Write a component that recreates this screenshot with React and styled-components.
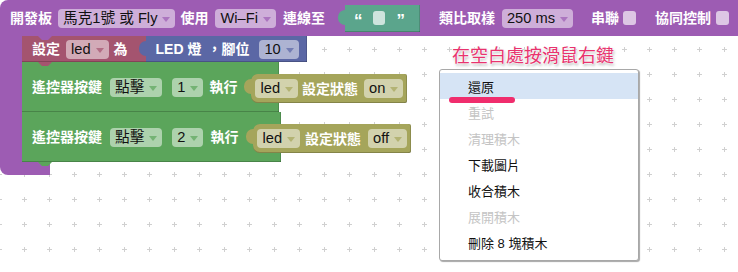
import styled, { createGlobalStyle, css } from "styled-components"

const FONT = `"Liberation Sans", "Noto Sans CJK TC", sans-serif`

const PURPLE = "#9d5cb3"
const RED = "#a4546f"
const BLUE = "#5b67a5"
const GREEN = "#5ba55b"
const OLIVE = "#a5a55b"
const TEAL = "#5ba58c"

const GlobalStyle = createGlobalStyle`
  html, body { margin: 0; padding: 0; background: #fff; }
  body { font-family: ${FONT}; }
`

// small notch hanging under a statement block
const notch = (color, left) => css`
  &::after {
    content: "";
    position: absolute;
    left: ${left}px;
    bottom: -4px;
    width: 14px;
    height: 4px;
    background: ${color};
    clip-path: polygon(0 0, 100% 0, 72% 100%, 28% 100%);
    z-index: 3;
  }
`

const App = () => {
  return (
    <>
      <GlobalStyle />
      <Workspace>
        <GridSvg width="738" height="272">
          <defs>
            <pattern id="grid" x="12" y="12" width="25" height="25" patternUnits="userSpaceOnUse">
              <path d="M10 12.5h5M12.5 10v5" stroke="#d0d0d0" strokeWidth="1" />
            </pattern>
          </defs>
          <rect width="738" height="272" fill="url(#grid)" />
        </GridSvg>

        <CBlock>
          <CHeader>
            <Label>開發板</Label>
            <Field $ml={6}>馬克1號 或 Fly<Arrow $color={PURPLE} /></Field>
            <Label $ml={5}>使用</Label>
            <Field $ml={7}>Wi–Fi<Arrow $color={PURPLE} /></Field>
            <Label $ml={7}>連線至</Label>
            <ValueBlock $color={TEAL} $h={27} $ml={20} $pl={9} $pr={15}>
              <Quote>“</Quote>
              <TextSlot />
              <Quote>”</Quote>
            </ValueBlock>
            <Label $ml={19}>類比取樣</Label>
            <Field $ml={7}>250 ms<Arrow $color={PURPLE} /></Field>
            <Label $ml={18}>串聯</Label>
            <Check $ml={4} />
            <Label $ml={19}>協同控制</Label>
            <Check $ml={5} />
          </CHeader>

          <CBody>
            <Arm />
            <Stack>
              <Statement $color={RED} $h={26}>
                <Label>設定</Label>
                <Field $ml={6}>led<Arrow $color={RED} /></Field>
                <Label $ml={5}>為</Label>
                <ValueBlock $color={BLUE} $stretch $ml={18} $pl={10} $pr={8}>
                  <Label>LED 燈</Label>
                  <Label $ml={6}>，腳位</Label>
                  <Field $ml={10}>10<Arrow $color={BLUE} /></Field>
                </ValueBlock>
              </Statement>

              <Statement $color={GREEN} $h={50} $w={257}>
                <Label>遙控器按鍵</Label>
                <Field $ml={8}>點擊<Arrow $color={GREEN} /></Field>
                <Field $ml={10}>1<Arrow $color={GREEN} /></Field>
                <Label $ml={6}>執行</Label>
                <ValueBlock $color={OLIVE} $h={29} $ml={14} $pl={4} $pr={4} $rounded $drop>
                  <Field>led<Arrow $color={OLIVE} /></Field>
                  <Label $ml={4}>設定狀態</Label>
                  <Field $ml={6}>on<Arrow $color={OLIVE} /></Field>
                </ValueBlock>
              </Statement>

              <Statement $color={GREEN} $h={50} $w={259}>
                <Label>遙控器按鍵</Label>
                <Field $ml={8}>點擊<Arrow $color={GREEN} /></Field>
                <Field $ml={10}>2<Arrow $color={GREEN} /></Field>
                <Label $ml={7}>執行</Label>
                <ValueBlock $color={OLIVE} $h={29} $ml={15} $pl={4} $pr={4} $rounded $drop>
                  <Field>led<Arrow $color={OLIVE} /></Field>
                  <Label $ml={5}>設定狀態</Label>
                  <Field $ml={7}>off<Arrow $color={OLIVE} /></Field>
                </ValueBlock>
              </Statement>
            </Stack>
          </CBody>
          <CFoot />
        </CBlock>

        <Note>在空白處按滑鼠右鍵</Note>

        <Menu>
          <MenuItem $active>還原</MenuItem>
          <MenuItem $disabled>重試</MenuItem>
          <MenuItem $disabled>清理積木</MenuItem>
          <MenuItem>下載圖片</MenuItem>
          <MenuItem>收合積木</MenuItem>
          <MenuItem $disabled>展開積木</MenuItem>
          <MenuItem>刪除 8 塊積木</MenuItem>
        </Menu>
        <Underline />
      </Workspace>
    </>
  )
}

const Workspace = styled.div`
  position: relative;
  width: 738px;
  height: 272px;
  overflow: hidden;
  background: #fff;
  font-family: ${FONT};
`

const GridSvg = styled.svg`
  position: absolute;
  left: 0;
  top: 0;
`

const CBlock = styled.div`
  position: relative;
  z-index: 1;
  display: flex;
  flex-direction: column;
  align-items: flex-start;
`

const CHeader = styled.div`
  position: relative;
  display: flex;
  align-items: center;
  width: 738px;
  height: 36px;
  box-sizing: border-box;
  padding-left: 10px;
  background: ${PURPLE};
  border-top-left-radius: 8px;
  ${notch(PURPLE, 38)}
`

const CBody = styled.div`
  display: flex;
`

const Arm = styled.div`
  width: 22px;
  background: ${PURPLE};
`

const Stack = styled.div`
  display: flex;
  flex-direction: column;
  align-items: flex-start;
`

const CFoot = styled.div`
  width: 50px;
  height: 13px;
  background: ${PURPLE};
  border-bottom-left-radius: 8px;
`

const Statement = styled.div`
  position: relative;
  display: flex;
  align-items: center;
  box-sizing: border-box;
  height: ${p => p.$h}px;
  width: ${p => (p.$w ? `${p.$w}px` : "auto")};
  padding-left: 10px;
  background: ${p => p.$color};
  box-shadow: inset 0 -1px 0 rgba(0, 0, 0, 0.2), inset -1px 0 0 rgba(0, 0, 0, 0.15);
  ${p => notch(p.$color, 16)}
`

const ValueBlock = styled.div`
  position: relative;
  display: flex;
  align-items: center;
  align-self: ${p => (p.$stretch ? "stretch" : "center")};
  height: ${p => (p.$h ? `${p.$h}px` : "auto")};
  margin-left: ${p => p.$ml || 0}px;
  margin-top: ${p => (p.$drop ? 3 : 0)}px;
  padding: 0 ${p => p.$pr}px 0 ${p => p.$pl}px;
  background: ${p => p.$color};
  border-radius: ${p => (p.$rounded ? "7px 2px 2px 7px" : "0")};
  box-shadow: inset 0 -1px 0 rgba(0, 0, 0, 0.2), inset -1px 0 0 rgba(0, 0, 0, 0.15);

  &::before {
    content: "";
    position: absolute;
    left: -7px;
    top: 5px;
    width: 8px;
    height: 15px;
    background: ${p => p.$color};
    border-radius: 7px 0 0 7px;
  }
`

const Label = styled.span`
  margin-left: ${p => p.$ml || 0}px;
  color: #fff;
  font-size: 14px;
  font-weight: 700;
  white-space: nowrap;
  line-height: 1;
`

const Field = styled.span`
  display: inline-flex;
  align-items: center;
  gap: 5px;
  height: 19px;
  margin-left: ${p => p.$ml || 0}px;
  padding: 0 5px;
  border-radius: 4px;
  background: rgba(255, 255, 255, 0.5);
  color: #111;
  font-size: 14.67px;
  white-space: nowrap;
  line-height: 1;
`

const Arrow = styled.i`
  width: 0;
  height: 0;
  margin-top: 2px;
  border-left: 4px solid transparent;
  border-right: 4px solid transparent;
  border-top: 5px solid ${p => p.$color};
  opacity: 0.7;
`

const Quote = styled.span`
  color: #fff;
  font-size: 17px;
  font-weight: 700;
  line-height: 1;
  margin-top: 4px;
`

const TextSlot = styled.span`
  width: 12px;
  height: 14px;
  margin: 0 11px;
  border-radius: 3px;
  background: rgba(255, 255, 255, 0.7);
`

const Check = styled.span`
  width: 13px;
  height: 14px;
  margin-left: ${p => p.$ml || 0}px;
  border-radius: 3px;
  background: rgba(255, 255, 255, 0.65);
`

const Note = styled.div`
  position: absolute;
  left: 452px;
  top: 45px;
  z-index: 6;
  font-family: "Noto Sans CJK TC", sans-serif;
  font-size: 18px;
  line-height: 18px;
  color: #e8336e;
  text-shadow: 0 0 2px #fff, 0 0 2px #fff, 0 0 1px #fff, 1px 2px 3px rgba(0, 0, 0, 0.35);
  white-space: nowrap;
`

const Menu = styled.div`
  position: absolute;
  left: 439px;
  top: 69px;
  z-index: 5;
  width: 200px;
  box-sizing: border-box;
  padding: 3px 0 5px;
  background: #fff;
  border: 1px solid #a8a8a8;
  border-radius: 3px;
  box-shadow: 1px 1px 1px rgba(0, 0, 0, 0.35);
`

const MenuItem = styled.div`
  display: flex;
  align-items: center;
  height: 26px;
  padding-left: 28px;
  font-size: 13px;
  color: ${p => (p.$disabled ? "#c4c4c4" : "#111")};
  background: ${p => (p.$active ? "#d6e4f5" : "transparent")};
`

const Underline = styled.div`
  position: absolute;
  left: 449px;
  top: 97px;
  z-index: 6;
  width: 66px;
  height: 6px;
  border-radius: 3px;
  background: #f02d6d;
`

export default App
